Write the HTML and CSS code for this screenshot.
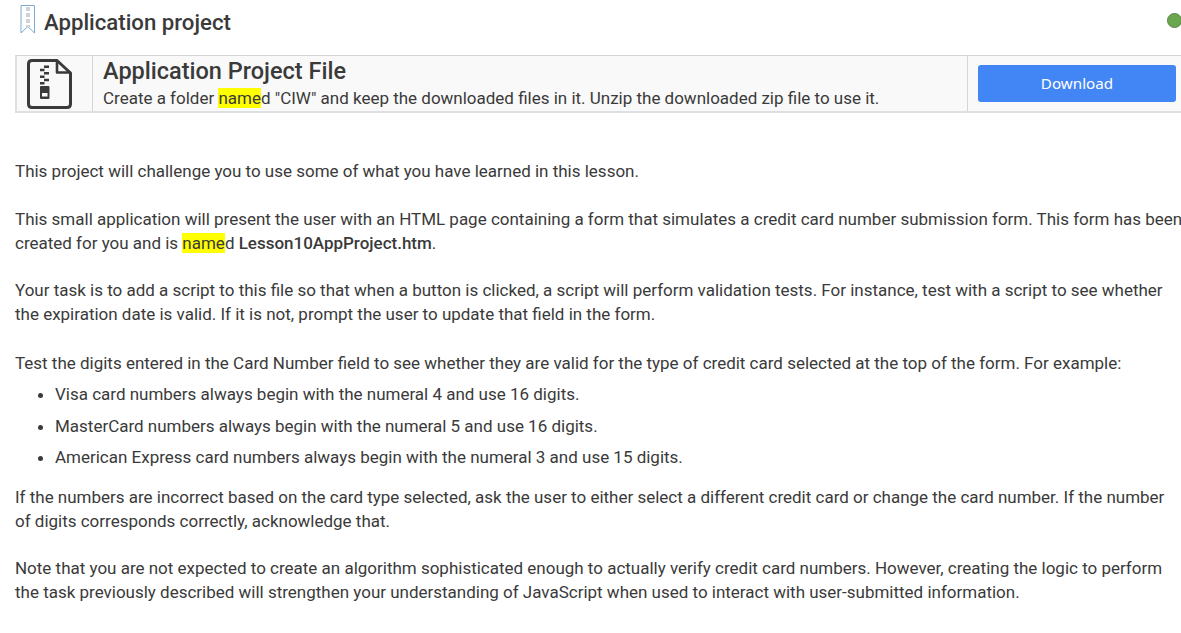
FILE: index.html
```html
<!DOCTYPE html>
<html lang="en">
<head>
    <meta charset="UTF-8">
    <meta name="viewport" content="width=device-width, initial-scale=1.0">
    <title>Application project</title>
    <link rel="stylesheet" href="styles.css">
</head>
<body>
    <div class="header">
        <svg class="bookmark" width="16" height="33" viewBox="0 0 16 33">
            <path d="M1 4.5H14.5V32L7.75 25.500L1 32Z" fill="#fff" stroke="#7fa9cf" stroke-width="1"/>
            <rect x="6" y="6" width="4" height="4" fill="#ccd3da"/>
            <rect x="6" y="12" width="4" height="4" fill="#ccd3da"/>
            <rect x="6" y="18" width="4" height="4" fill="#ccd3da"/>
            <rect x="6" y="24" width="4" height="2" fill="#ccd3da"/>
        </svg>
        <h1>Application project</h1>
        <span class="status-dot"></span>
    </div>

    <div class="file-box">
        <div class="file-icon">
            <svg width="47" height="52" viewBox="0 0 47 52">
                <path d="M6 2.500H31L44.500 15V46Q44.500 49.500 41 49.500H6Q2.500 49.500 2.500 46V6Q2.500 2.500 6 2.500Z" fill="none" stroke="#3a3a3a" stroke-width="3" stroke-linejoin="round"/>
                <path d="M31 2.500V14.500H44.500" fill="none" stroke="#3a3a3a" stroke-width="2.6" stroke-linejoin="round"/>
                <path d="M18 7.500H23V10H18ZM14 10.800H18.500V13.300H14ZM18 14.100H23V16.600H18ZM14 17.500H18.500V20H14ZM18 20.800H23V23.300H18ZM14 24.100H18.500V26.600H14Z" fill="#3a3a3a"/>
                <rect x="14" y="28" width="9.500" height="13" rx="1" fill="#3a3a3a"/>
                <rect x="16" y="35" width="5.500" height="3.500" fill="#f9f9f9"/>
            </svg>
        </div>
        <div class="file-info">
            <h2>Application Project File</h2>
            <p>Create a folder <mark>name</mark>d "CIW" and keep the downloaded files in it. Unzip the downloaded zip file to use it.</p>
        </div>
        <div class="file-action">
            <button type="button" class="download-button">Download</button>
        </div>
    </div>

    <div class="content">
        <p>This project will challenge you to use some of what you have learned in this lesson.</p>
        <p>This small application will present the user with an HTML page containing a form that simulates a credit card number submission form. This form has been created for you and is <mark>name</mark>d <b>Lesson10AppProject.htm</b>.</p>
        <p>Your task is to add a script to this file so that when a button is clicked, a script will perform validation tests. For instance, test with a script to see whether the expiration date is valid. If it is not, prompt the user to update that field in the form.</p>
        <p class="list-intro">Test the digits entered in the Card Number field to see whether they are valid for the type of credit card selected at the top of the form. For example:</p>
        <ul>
            <li>Visa card numbers always begin with the numeral 4 and use 16 digits.</li>
            <li>MasterCard numbers always begin with the numeral 5 and use 16 digits.</li>
            <li>American Express card numbers always begin with the numeral 3 and use 15 digits.</li>
        </ul>
        <p>If the numbers are incorrect based on the card type selected, ask the user to either select a different credit card or change the card number. If the number of digits corresponds correctly, acknowledge that.</p>
        <p>Note that you are not expected to create an algorithm sophisticated enough to actually verify credit card numbers. However, creating the logic to perform the task previously described will strengthen your understanding of JavaScript when used to interact with user-submitted information.</p>
    </div>
</body>
</html>
```

FILE: styles.css
```css
html, body {
    overflow: hidden;
}
body {
    margin: 0;
    width: 1181px;
    height: 633px;
    background-color: #fff;
    font-family: Roboto, sans-serif;
    font-size: 16.99px;
    line-height: 23.74px;
    color: #3a3a3a;
}
.header {
    display: flex;
    align-items: center;
    height: 40px;
    padding-left: 20px;
    margin-bottom: 15px;
}
.bookmark {
    margin-top: -5px;
    margin-right: 8px;
}
h1 {
    flex: 1;
    margin: 4px 0 0;
    font-size: 22.2px;
    font-weight: 500;
    line-height: 40px;
}
.status-dot {
    width: 15px;
    height: 15px;
    margin-right: -1px;
    border-radius: 50%;
    background-color: #6aa84f;
    border: 1px solid #5b7f4a;
    box-sizing: border-box;
}
.file-box {
    display: flex;
    height: 58px;
    margin-left: 15px;
    box-sizing: border-box;
    background-color: #f9f9f9;
    border-top: 1px solid #d5d5d5;
    border-bottom: 2px solid #dcdfe3;
    border-left: 2px solid #dcdfe3;
}
.file-icon {
    display: flex;
    align-items: center;
    flex: none;
    width: 66px;
    padding-left: 9px;
    border-right: 1px solid #d5d5d5;
}
.file-info {
    flex: 1;
    padding-left: 10px;
}
.file-info h2 {
    margin: 0;
    font-size: 23.5px;
    font-weight: 500;
    line-height: 30px;
}
.file-info p {
    margin: 1px 0 0;
}
mark {
    background-color: #ff0;
    color: inherit;
}
.file-action {
    width: 214px;
    padding: 9px 0 0 10px;
    box-sizing: border-box;
    border-left: 1px solid #d5d5d5;
}
.download-button {
    width: 198px;
    height: 37px;
    padding: 0 0 2px;
    border: none;
    border-radius: 3px;
    background-color: #4285f4;
    color: #fff;
    font-family: "Noto Sans", sans-serif;
    font-size: 15.2px;
}
.content {
    margin-top: 47.3px;
    padding-left: 15px;
    width: 1168.5px;
}
.content p {
    margin: 0 0 23.74px;
}
.content p.list-intro {
    margin: 25.74px 0 7.56px;
}
.content b {
    font-weight: 500;
}
ul {
    margin: 0 0 16.16px;
    padding-left: 40px;
}
li {
    margin-bottom: 7.56px;
}
```
